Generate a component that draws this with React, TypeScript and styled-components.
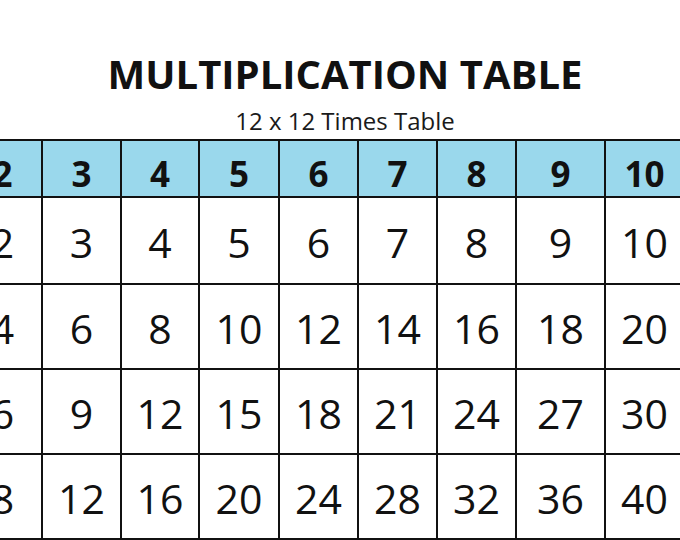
import styled, { createGlobalStyle } from 'styled-components';

const GlobalStyle = createGlobalStyle`
  html, body {
    margin: 0;
    padding: 0;
    background: #fff;
    overflow: hidden;
  }
`;

const Page = styled.div`
  width: 680px;
  height: 540px;
  overflow: hidden;
  font-family: 'Open Sans', 'Liberation Sans', sans-serif;
  color: #111;
  padding-top: 50px;
  box-sizing: border-box;
`;

const Title = styled.h1`
  margin: 0;
  padding-left: 10px;
  font-size: 40px;
  line-height: 47px;
  font-weight: 700;
  text-align: center;
`;

const Subtitle = styled.div`
  margin-top: 9px;
  padding-left: 10px;
  font-size: 24px;
  line-height: 29px;
  text-align: center;
  color: #1a1a1a;
`;

const Grid = styled.div`
  display: grid;
  width: max-content;
  margin-top: 4px;
  margin-left: -117px;
  grid-template-columns: 77px 77px 77px 76px 78px 77px 77px 77px 87px 77px 77px 77px;
  grid-template-rows: 55px 85px repeat(11, 83px);
  gap: 2px;
  padding: 2px;
  background: #111;
`;

const Cell = styled.div<{ $head?: boolean }>`
  display: flex;
  align-items: center;
  justify-content: center;
  background: ${(p) => (p.$head ? '#9ad8ec' : '#fff')};
  font-size: ${(p) => (p.$head ? '35px' : '41px')};
  font-weight: ${(p) => (p.$head ? 700 : 400)};
  padding-top: ${(p) => (p.$head ? '9px' : '2px')};
  box-sizing: border-box;
`;

const nums = Array.from({ length: 12 }, (_, i) => i + 1);

export default function App() {
  return (
    <>
      <GlobalStyle />
      <Page>
        <Title>MULTIPLICATION TABLE</Title>
        <Subtitle>12 x 12 Times Table</Subtitle>
        <Grid>
          {nums.map((n) => (
            <Cell key={`h${n}`} $head>
              {n}
            </Cell>
          ))}
          {nums.map((r) =>
            nums.map((c) => <Cell key={`${r}-${c}`}>{r * c}</Cell>)
          )}
        </Grid>
      </Page>
    </>
  );
}
